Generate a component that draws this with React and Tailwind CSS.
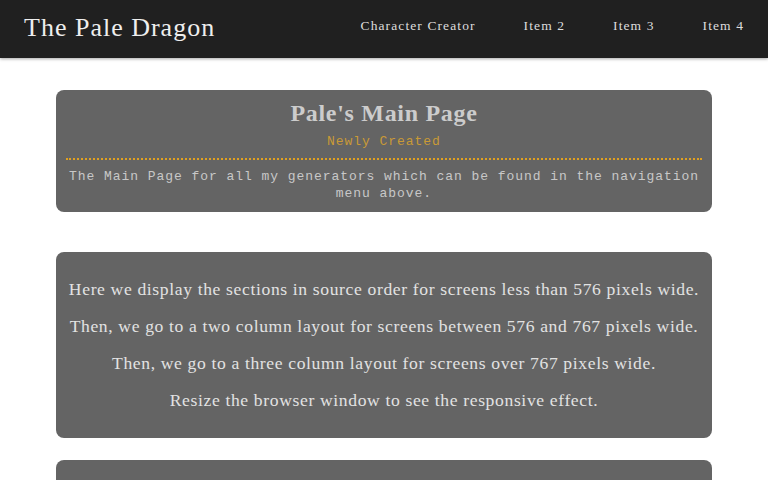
export default function App() {
  const navItems = ['Character Creator', 'Item 2', 'Item 3', 'Item 4'];

  return (
    <div className="min-h-screen bg-white font-['Liberation_Serif',serif]">
      <header className="h-[58px] bg-[#202020] flex items-center justify-between pl-6 shadow-[0_1px_3px_rgba(0,0,0,0.35)]">
        <h1 className="text-[26px] tracking-[1px] text-[#eeeeee] pb-[3px]">The Pale Dragon</h1>
        <nav className="flex items-center pb-[5px] pr-6">
          {navItems.map((item) => (
            <a key={item} className="text-[13.5px] tracking-[1.1px] text-[#dddddd] pl-12 first:pl-0">
              {item}
            </a>
          ))}
        </nav>
      </header>

      <main className="px-14 pt-8 flex flex-col">
        <section className="bg-[#646464] rounded-lg px-2.5 pt-[7px] pb-[10px] text-center">
          <h2 className="text-[24px] font-bold text-[#cccccc] tracking-[0.7px] leading-8">Pale's Main Page</h2>
          <p className="font-['Liberation_Mono',monospace] text-[13px] tracking-[0.95px] text-[#c99a36] leading-5 mt-[3px]">
            Newly Created
          </p>
          <div className="border-b-2 border-dotted border-[#e0a020] mt-[6px]"></div>
          <p className="font-['Liberation_Mono',monospace] text-[13px] tracking-[0.95px] text-[#c8c8c8] leading-[17px] mt-[8px]">
            The Main Page for all my generators which can be found in the navigation menu above.
          </p>
        </section>

        <section className="bg-[#646464] rounded-lg mt-10 pt-[26px] pb-[27px] flex flex-col gap-[15px] text-center text-[17.6px] tracking-[0.63px] text-[#e2e2e2] leading-[22px]">
          <p>Here we display the sections in source order for screens less than 576 pixels wide.</p>
          <p>Then, we go to a two column layout for screens between 576 and 767 pixels wide.</p>
          <p>Then, we go to a three column layout for screens over 767 pixels wide.</p>
          <p>Resize the browser window to see the responsive effect.</p>
        </section>

        <section className="bg-[#646464] rounded-lg mt-[22px] pt-[13px] pb-4 text-center">
          <h2 className="text-[24px] font-bold text-[#cccccc] tracking-[0.7px] leading-8">Section One</h2>
        </section>
      </main>
    </div>
  );
}
